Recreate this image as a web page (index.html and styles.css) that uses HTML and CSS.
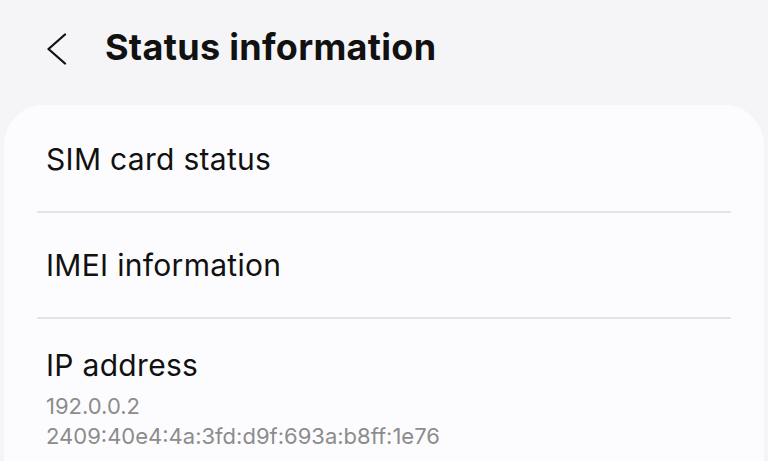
FILE: index.html
```html
<!DOCTYPE html>
<html>
<head>
<meta charset="utf-8">
<link rel="stylesheet" href="styles.css">
</head>
<body>
<div class="page">
  <header class="header">
    <svg class="back" width="22" height="32" viewBox="0 0 22 32"><path d="M19 1.5 L2.5 16 L19 30.5" fill="none" stroke="#111" stroke-width="2.3" stroke-linecap="round" stroke-linejoin="round"/></svg>
    <h1 class="title">Status information</h1>
  </header>
  <section class="card">
    <div class="item"><div class="label">SIM card status</div></div>
    <div class="divider"></div>
    <div class="item"><div class="label">IMEI information</div></div>
    <div class="divider"></div>
    <div class="item item-last">
      <div class="label">IP address</div>
      <div class="subs">
        <div class="sub">192.0.0.2</div>
        <div class="sub">2409:40e4:4a:3fd:d9f:693a:b8ff:1e76</div>
      </div>
    </div>
  </section>
</div>
</body>
</html>
```
FILE: styles.css
```css
html, body {
  margin: 0;
  padding: 0;
  background: #f5f5f7;
  overflow: hidden;
}
.page {
  width: 768px;
  height: 461px;
  font-family: Inter, Roboto, sans-serif;
  color: #111;
}
.header {
  height: 105px;
  display: flex;
  align-items: center;
  box-sizing: border-box;
  padding-left: 46px;
  padding-bottom: 12px;
}
.back {
  display: block;
  margin-right: 37px;
  position: relative;
  top: 2px;
}
.title {
  margin: 0;
  font-size: 36px;
  font-weight: 700;
  letter-spacing: 0.3px;
}
.card {
  margin: 0 4px;
  background: #fcfcfe;
  border-radius: 40px 40px 0 0;
  height: 356px;
  padding: 1.5px 33px 0;
  box-sizing: border-box;
}
.item {
  height: 104px;
  display: flex;
  flex-direction: column;
  justify-content: center;
  padding-left: 9px;
}
.item-last {
  justify-content: flex-start;
  padding-top: 28px;
  height: auto;
}
.label {
  font-size: 30px;
  line-height: 36px;
  letter-spacing: 0.3px;
}
.subs {
  margin-top: 8px;
}
.sub {
  font-size: 22px;
  line-height: 30px;
  color: #8c8c8c;
}
.divider {
  height: 2px;
  background: #e5e5e7;
}
```
